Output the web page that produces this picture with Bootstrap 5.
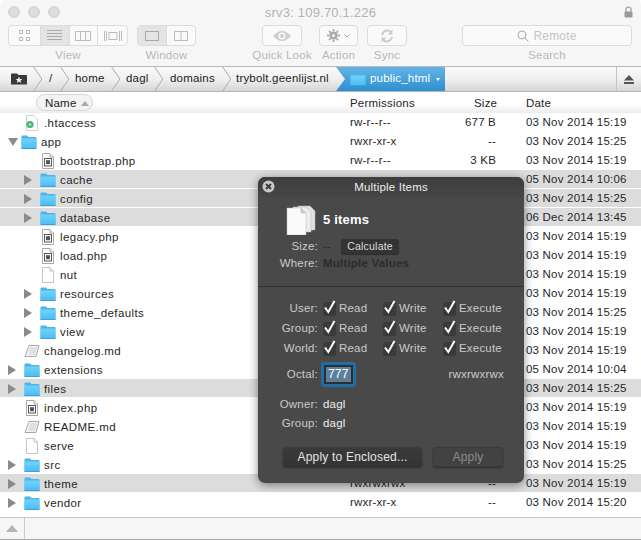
<!DOCTYPE html>
<html lang="en">
<head>
<meta charset="utf-8">
<title>srv3</title>
<link href="https://cdn.jsdelivr.net/npm/bootstrap@5.3.0/dist/css/bootstrap.min.css" rel="stylesheet">
<style>
html,body{margin:0;height:540px;overflow:hidden;background:#fff}
body{font-family:"Liberation Sans",Arial,sans-serif;font-size:11.5px;color:#262626;letter-spacing:.2px}
.win{width:641px;height:540px;position:relative;overflow:hidden;border-radius:5px 5px 0 0}
.topbar{height:67px;background:#f6f6f6;border-bottom:1px solid #b9b9b9}
.wintitle{height:25px;line-height:25px;text-align:center;color:#b3b3b3;font-size:13px;letter-spacing:.2px;position:relative}
.lights{position:absolute;left:8px;top:6px;gap:8px}
.lights i{width:12px;height:12px;border-radius:50%;background:#dcdcdc;border:1px solid #d0d0d0;display:block}
.lockic{position:absolute;right:8px;top:6px}
.tools{padding-left:8px}
.tgroup{display:flex;flex-direction:column;align-items:center}
.tlabel{color:#b9b9b9;font-size:11.5px;line-height:12px;margin-top:3px;white-space:nowrap}
.seg{display:flex;height:21px;border:1px solid #dcdcdc;border-radius:4px;background:#fafafa;overflow:hidden}
.seg span{display:flex;align-items:center;justify-content:center;border-left:1px solid #dcdcdc;height:100%}
.seg span:first-child{border-left:0}
.seg .on{background:#e4e4e4}
.g-view{width:120px}.g-window{width:59px;margin-left:9px}.g-ql{width:40px;margin-left:66px}
.g-action{width:39px;margin-left:17px}.g-sync{width:40px;margin-left:9px}.g-search{width:170px;margin-left:55px}
.searchtxt{color:#c4c4c4;font-size:12px;gap:4px}
.pathbar{height:25px;background:linear-gradient(#fafafa,#f0f0f0 50%,#d6d6d6);border-bottom:1px solid #b5b5b5;font-size:11.5px;color:#222}
.crumb{display:flex;align-items:center;height:100%;white-space:nowrap;flex:none}
.crumbsep{flex:none;display:block}
.crumbon{width:109px;height:100%;margin-left:-8px;padding-left:14px;gap:4px;color:#fff;display:flex;align-items:center;background:linear-gradient(#62b4e6,#2f8fd2);clip-path:polygon(0 0,100% 0,100% 100%,0 100%,9px 50%);flex:none}
.caretd{width:0;height:0;border-left:2.5px solid transparent;border-right:2.5px solid transparent;border-top:3px solid #fff;margin-left:2px}
.ejectbox{margin-left:auto;width:25px;height:100%;border-left:1px solid #c4c4c4;display:flex;align-items:center;justify-content:center}
.colhead{height:21px;background:linear-gradient(#fff 55%,#ececec);position:relative;font-size:11.5px}
.namepill{position:absolute;left:36px;top:2px;width:57px;height:17px;border:1px solid #d6d6d6;border-radius:9px;background:#f3f3f3;line-height:16px;padding-left:8px;color:#222}
.upc{position:absolute;left:44px;top:6px;width:0;height:0;border-left:4px solid transparent;border-right:4px solid transparent;border-bottom:5px solid #a8a8a8}
.hperm{position:absolute;left:350px;top:3px}.hsize{position:absolute;left:474px;top:3px}.hdate{position:absolute;left:526px;top:3px}
.frow{height:19px;display:flex;align-items:center;white-space:nowrap;position:relative}
.frow.sel{background:linear-gradient(#dcdcdc 18px,#fff 18px)}
.tw{width:8px;flex:none;margin-right:5px;display:block}
.ic{width:16px;height:16px;flex:none;margin-right:4px;display:block}
.fname{flex:none;line-height:18px;letter-spacing:.4px}
.cperm{position:absolute;left:350px;top:0;line-height:18px}
.csize{position:absolute;right:145px;top:0;line-height:18px}
.cdate{position:absolute;left:526px;top:0;line-height:18px}
.lv1{padding-left:8px}
.lv0f{padding-left:24px}
.lv2t{padding-left:24px}
.lv2f{padding-left:40px}
.footbar{position:absolute;left:0;right:0;bottom:0;height:23px;background:#f6f6f6;border-top:1px solid #c9c9c9;border-bottom:1px solid #aaa;display:flex}
.footup{width:25px;border-right:1px solid #ccc;display:flex;align-items:center;justify-content:center}
.dlg{position:absolute;left:258px;top:177px;width:266px;height:306px;background:rgba(70,70,70,.985);border-radius:7px;box-shadow:0 2px 10px rgba(0,0,0,.45);color:#c9c9c9;font-size:11.5px}
.dlghead{height:20px;line-height:20px;text-align:center;color:#eee;position:relative;background:linear-gradient(#3e3e3e,#454545);border-radius:7px 7px 0 0}
.dlgclose{position:absolute;left:4px;top:3px;display:block}
.inforow{height:36px;margin-top:5px;padding-left:28px}
.itemcount{font-weight:700;font-size:13px;color:#fff;margin-left:7px}
.lblw{width:60px;text-align:right;flex:none;margin-right:5px}
.szrow{height:17px}
.calc{background:#333;color:#ddd;border-radius:3px;width:58px;height:15px;line-height:15px;text-align:center;font-size:10.5px;margin-left:10px;box-shadow:0 1px 1px rgba(0,0,0,.4)}
.dim{color:#2c2c2c}
.dlghr{height:1px;background:#333;margin:14px 0 12px}
.permrow{height:20px}
.chk{width:13px;height:14px;background:#3a3a3a;border-radius:2px;flex:none;position:relative;margin-right:3px}
.chk svg{position:absolute;left:0;top:-3px;display:block}
.permcell{width:60px}
.octrow{height:25px;margin-top:3px}
.octbox{margin-left:-2px;width:35px;height:25px;border:3px solid #1f6ea6;border-radius:3px;background:#2e2e2e;display:flex;align-items:center;padding-left:2px;flex:none}
.octbox span{background:#5d7f9b;color:#fff;line-height:15px;padding:0 2px;font-size:12px}
.octmode{margin-left:auto;margin-right:20px;color:#ccc}
.ownrow{height:19px}
.ownrow1{margin-top:8px}
.ownv{color:#eee}
.dbtn{background:linear-gradient(#3b3b3b,#333);border-radius:3px;height:20px;line-height:20px;text-align:center;color:#e6e6e6;box-shadow:0 1px 2px rgba(0,0,0,.35);font-size:12px;flex:none}
.dbtn1{width:139px;margin-left:25px}
.dbtn2{width:70px;margin-left:11px;color:#8a8a8a;background:#424242;border:1px solid #3a3a3a;line-height:18px}
.btnrow{margin-top:14px}
</style>
</head>
<body>
<svg width="0" height="0" class="position-absolute">
<defs>
<linearGradient id="fg" x1="0" y1="0" x2="0" y2="1"><stop offset="0" stop-color="#6fd3fb"/><stop offset="1" stop-color="#4cbcf2"/></linearGradient>
<symbol id="folder" viewBox="0 0 16 16"><path d="M0.5 2.5Q0.5 1.5 1.5 1.5H6L7.5 3H14.5Q15.5 3 15.5 4V14.5H0.5Z" fill="#4cb4e8"/><path d="M0.5 4.5H15.5V14Q15.5 14.8 14.5 14.8H1.5Q0.5 14.8 0.5 14Z" fill="url(#fg)"/><rect x="0.5" y="14.2" width="15" height="0.8" fill="#2f9bd6"/></symbol>
<symbol id="doc" viewBox="0 0 16 16"><path d="M2.5 .5H10L13.5 4V15.5H2.5Z" fill="#fff" stroke="#c4c4c4"/><path d="M10 .5V4H13.5" fill="#eee" stroke="#c4c4c4"/></symbol>
<symbol id="php" viewBox="0 0 16 16"><path d="M2.5 .5H10L13.5 4V15.5H2.5Z" fill="#fff" stroke="#a8a8a8"/><path d="M10 .5V4H13.5" fill="#eee" stroke="#a8a8a8"/><rect x="4.5" y="5.5" width="7" height="7.5" fill="#fff" stroke="#555"/><rect x="6" y="7.2" width="4" height="4" fill="#555"/></symbol>
<symbol id="md" viewBox="0 0 16 16"><path d="M5 2.5H15L12 13.5H1Z" fill="#f3f3f3" stroke="#aaa"/><path d="M6 5H13M5.5 7H12.5M5 9H12M4.5 11H11" stroke="#c4d0dc"/></symbol>
<symbol id="hta" viewBox="0 0 16 16"><path d="M2.5 .5H10L13.5 4V15.5H2.5Z" fill="#fff" stroke="#d0d0d0"/><circle cx="6" cy="9.5" r="3.6" fill="#3fb56f"/><circle cx="6" cy="9.5" r="1.6" fill="#9fe0b8"/></symbol>
<symbol id="tr" viewBox="0 0 8 10"><path d="M0 0L8 5L0 10Z" fill="#8a8a8a"/></symbol>
<symbol id="td" viewBox="0 0 10 8"><path d="M0 0H10L5 8Z" fill="#8a8a8a"/></symbol>
<symbol id="chev" viewBox="0 0 10 25"><path d="M0.5 0L9 12.5L0.5 25" fill="none" stroke="#a9a9a9"/></symbol>
<symbol id="tick" viewBox="0 0 13 16"><path d="M2 8.5L5.3 13L11.5 2" fill="none" stroke="#fff" stroke-width="2"/></symbol>
</defs>
</svg>
<div class="win">
  <div class="topbar">
    <div class="wintitle">srv3: 109.70.1.226
      <div class="lights d-flex"><i></i><i></i><i></i></div>
      <svg class="lockic" width="9" height="12" viewBox="0 0 9 12"><path d="M2 6V3.5a2.5 2.5 0 0 1 5 0V6" fill="none" stroke="#9a9a9a" stroke-width="1.2"/><rect x=".5" y="5.5" width="8" height="6" rx="1" fill="#9a9a9a"/></svg>
    </div>
    <div class="tools d-flex">
      <div class="tgroup g-view">
        <div class="seg w-100">
          <span style="width:31px"><svg width="11" height="11" viewBox="0 0 11 11"><g fill="none" stroke="#bbb"><rect x=".5" y=".5" width="3" height="3"/><rect x="7.5" y=".5" width="3" height="3"/><rect x=".5" y="7.5" width="3" height="3"/><rect x="7.5" y="7.5" width="3" height="3"/></g></svg></span>
          <span class="on" style="width:29px"><svg width="15" height="11" viewBox="0 0 15 11"><path d="M0 .5H15M0 3.5H15M0 6.5H15M0 9.5H15" stroke="#aaa"/></svg></span>
          <span style="width:29px"><svg width="16" height="10" viewBox="0 0 16 10"><path d="M.5.5H15.5V9.5H.5ZM5.5.5V9.5M10.5.5V9.5" fill="none" stroke="#bbb"/></svg></span>
          <span style="width:30px"><svg width="18" height="10" viewBox="0 0 18 10"><path d="M.5 0V10M2.5 0V10M15.5 0V10M17.5 0V10" stroke="#bbb"/><rect x="5" y="1.5" width="8" height="7" fill="none" stroke="#bbb"/></svg></span>
        </div>
        <div class="tlabel">View</div>
      </div>
      <div class="tgroup g-window">
        <div class="seg w-100">
          <span class="on" style="width:29px"><svg width="14" height="10" viewBox="0 0 14 10"><rect x=".5" y=".5" width="13" height="9" fill="none" stroke="#aaa"/></svg></span>
          <span style="width:30px"><svg width="14" height="10" viewBox="0 0 14 10"><path d="M.5.5H13.5V9.5H.5ZM7 .5V9.5" fill="none" stroke="#bbb"/></svg></span>
        </div>
        <div class="tlabel">Window</div>
      </div>
      <div class="tgroup g-ql">
        <div class="seg w-100 justify-content-center align-items-center"><svg width="18" height="12" viewBox="0 0 18 12"><path d="M0 6Q9 -4 18 6Q9 16 0 6Z" fill="#cfcfcf"/><circle cx="9" cy="6" r="3.5" fill="#fafafa"/><circle cx="9" cy="6" r="2" fill="#cfcfcf"/></svg></div>
        <div class="tlabel">Quick Look</div>
      </div>
      <div class="tgroup g-action">
        <div class="seg w-100 justify-content-center align-items-center gap-1"><svg width="13" height="13" viewBox="0 0 13 13"><circle cx="6.5" cy="6.5" r="2.8" fill="none" stroke="#aaa" stroke-width="2.6"/><path d="M6.5 0V13M0 6.5H13M2 2L11 11M11 2L2 11" stroke="#aaa" stroke-width="1.8" stroke-dasharray="2.2 8.6 2.2"/></svg><svg width="6" height="4" viewBox="0 0 6 4"><path d="M.5.5L3 3L5.5.5" fill="none" stroke="#aaa"/></svg></div>
        <div class="tlabel">Action</div>
      </div>
      <div class="tgroup g-sync">
        <div class="seg w-100 justify-content-center align-items-center"><svg width="14" height="14" viewBox="0 0 14 14"><path d="M2.2 6A5 5 0 0 1 11 3.4M11.8 8A5 5 0 0 1 3 10.6" fill="none" stroke="#ccc" stroke-width="2"/><path d="M12.5 0.5V5.5H7.5ZM1.5 13.5V8.5H6.5Z" fill="#ccc"/></svg></div>
        <div class="tlabel">Sync</div>
      </div>
      <div class="tgroup g-search">
        <div class="seg w-100 justify-content-center align-items-center searchtxt"><svg width="12" height="12" viewBox="0 0 12 12"><circle cx="5" cy="5" r="4" fill="none" stroke="#aaa"/><path d="M8 8L11.5 11.5" stroke="#aaa"/></svg>Remote</div>
        <div class="tlabel">Search</div>
      </div>
    </div>
  </div>

  <div class="pathbar d-flex">
    <div class="crumb" style="width:33px;padding-left:11px"><svg width="16" height="12" viewBox="0 0 16 12"><path d="M0 1.5Q0 .5 1 .5H6L7.5 2H15Q16 2 16 3V11.5H0Z" fill="#3a3a3a"/><path d="M8 3.6L9 6H11.4L9.5 7.5L10.2 10L8 8.5L5.8 10L6.5 7.5L4.6 6H7Z" fill="#fff"/></svg></div>
    <svg class="crumbsep" width="10" height="24"><use href="#chev"/></svg>
    <div class="crumb" style="width:17px;padding-left:6px">/</div>
    <svg class="crumbsep" width="10" height="24"><use href="#chev"/></svg>
    <div class="crumb" style="width:41px;padding-left:5px">home</div>
    <svg class="crumbsep" width="10" height="24"><use href="#chev"/></svg>
    <div class="crumb" style="width:33px;padding-left:5px">dagl</div>
    <svg class="crumbsep" width="10" height="24"><use href="#chev"/></svg>
    <div class="crumb" style="width:58px;padding-left:6px">domains</div>
    <svg class="crumbsep" width="10" height="24"><use href="#chev"/></svg>
    <div class="crumb" style="width:112px;padding-left:4px">trybolt.geenlijst.nl</div>
    <div class="crumbon"><svg class="ic m-0" width="16" height="16"><use href="#folder"/></svg><span>public_html</span><i class="caretd"></i></div>
    <div class="ejectbox"><svg width="10" height="9" viewBox="0 0 10 9"><path d="M5 0L10 5.5H0Z" fill="#555"/><rect y="7" width="10" height="2" fill="#555"/></svg></div>
  </div>

  <div class="colhead">
    <div class="namepill">Name<i class="upc"></i></div>
    <span class="hperm">Permissions</span><span class="hsize">Size</span><span class="hdate">Date</span>
  </div>

  <div class="filelist">
    <div class="frow lv0f"><svg class="ic"><use href="#hta"/></svg><span class="fname">.htaccess</span><span class="cperm">rw-r--r--</span><span class="csize">677 B</span><span class="cdate">03 Nov 2014 15:19</span></div>
    <div class="frow lv1"><svg class="tw" height="8" width="10" style="width:10px;margin-right:3px"><use href="#td"/></svg><svg class="ic"><use href="#folder"/></svg><span class="fname">app</span><span class="cperm">rwxr-xr-x</span><span class="csize">--</span><span class="cdate">03 Nov 2014 15:25</span></div>
    <div class="frow lv2f"><svg class="ic"><use href="#php"/></svg><span class="fname">bootstrap.php</span><span class="cperm">rw-r--r--</span><span class="csize">3 KB</span><span class="cdate">03 Nov 2014 15:19</span></div>
    <div class="frow lv2t sel"><svg class="tw" height="10"><use href="#tr"/></svg><svg class="ic" style="margin-left:3px"><use href="#folder"/></svg><span class="fname">cache</span><span class="cdate">05 Nov 2014 10:06</span></div>
    <div class="frow lv2t sel"><svg class="tw" height="10"><use href="#tr"/></svg><svg class="ic" style="margin-left:3px"><use href="#folder"/></svg><span class="fname">config</span><span class="cdate">03 Nov 2014 15:25</span></div>
    <div class="frow lv2t sel"><svg class="tw" height="10"><use href="#tr"/></svg><svg class="ic" style="margin-left:3px"><use href="#folder"/></svg><span class="fname">database</span><span class="cdate">06 Dec 2014 13:45</span></div>
    <div class="frow lv2f"><svg class="ic"><use href="#php"/></svg><span class="fname">legacy.php</span><span class="cdate">03 Nov 2014 15:19</span></div>
    <div class="frow lv2f"><svg class="ic"><use href="#php"/></svg><span class="fname">load.php</span><span class="cdate">03 Nov 2014 15:19</span></div>
    <div class="frow lv2f"><svg class="ic"><use href="#doc"/></svg><span class="fname">nut</span><span class="cdate">03 Nov 2014 15:19</span></div>
    <div class="frow lv2t"><svg class="tw" height="10"><use href="#tr"/></svg><svg class="ic" style="margin-left:3px"><use href="#folder"/></svg><span class="fname">resources</span><span class="cdate">03 Nov 2014 15:19</span></div>
    <div class="frow lv2t"><svg class="tw" height="10"><use href="#tr"/></svg><svg class="ic" style="margin-left:3px"><use href="#folder"/></svg><span class="fname">theme_defaults</span><span class="cdate">03 Nov 2014 15:25</span></div>
    <div class="frow lv2t"><svg class="tw" height="10"><use href="#tr"/></svg><svg class="ic" style="margin-left:3px"><use href="#folder"/></svg><span class="fname">view</span><span class="cdate">03 Nov 2014 15:19</span></div>
    <div class="frow lv0f"><svg class="ic"><use href="#md"/></svg><span class="fname">changelog.md</span><span class="cdate">03 Nov 2014 15:19</span></div>
    <div class="frow lv1"><svg class="tw" height="10"><use href="#tr"/></svg><svg class="ic" style="margin-left:3px"><use href="#folder"/></svg><span class="fname">extensions</span><span class="cdate">05 Nov 2014 10:04</span></div>
    <div class="frow lv1 sel"><svg class="tw" height="10"><use href="#tr"/></svg><svg class="ic" style="margin-left:3px"><use href="#folder"/></svg><span class="fname">files</span><span class="cdate">03 Nov 2014 15:25</span></div>
    <div class="frow lv0f"><svg class="ic"><use href="#php"/></svg><span class="fname">index.php</span><span class="cdate">03 Nov 2014 15:19</span></div>
    <div class="frow lv0f"><svg class="ic"><use href="#md"/></svg><span class="fname">README.md</span><span class="cdate">03 Nov 2014 15:19</span></div>
    <div class="frow lv0f"><svg class="ic"><use href="#doc"/></svg><span class="fname">serve</span><span class="cdate">03 Nov 2014 15:19</span></div>
    <div class="frow lv1"><svg class="tw" height="10"><use href="#tr"/></svg><svg class="ic" style="margin-left:3px"><use href="#folder"/></svg><span class="fname">src</span><span class="cdate">03 Nov 2014 15:25</span></div>
    <div class="frow lv1 sel"><svg class="tw" height="10"><use href="#tr"/></svg><svg class="ic" style="margin-left:3px"><use href="#folder"/></svg><span class="fname">theme</span><span class="cperm">rwxrwxrwx</span><span class="csize">--</span><span class="cdate">03 Nov 2014 15:19</span></div>
    <div class="frow lv1"><svg class="tw" height="10"><use href="#tr"/></svg><svg class="ic" style="margin-left:3px"><use href="#folder"/></svg><span class="fname">vendor</span><span class="cperm">rwxr-xr-x</span><span class="csize">--</span><span class="cdate">03 Nov 2014 15:20</span></div>
  </div>

  <div class="footbar"><div class="footup"><svg width="12" height="7" viewBox="0 0 12 7"><path d="M6 0L12 7H0Z" fill="#b4b4b4"/></svg></div></div>

  <div class="dlg">
    <div class="dlghead">Multiple Items
      <svg class="dlgclose" width="13" height="13" viewBox="0 0 13 13"><circle cx="6.5" cy="6.5" r="6" fill="#c9c9c9"/><path d="M4 4L9 9M9 4L4 9" stroke="#3f3f3f" stroke-width="2"/></svg>
    </div>
    <div class="inforow d-flex align-items-center">
      <svg width="30" height="30" viewBox="0 0 30 30"><g stroke="#bbb" stroke-width=".5"><path d="M12 1H24L29 6V25H12Z" fill="#e0e0e0"/><path d="M7 2H20L25 7V27H7Z" fill="#ececec"/><path d="M1 3H15L20 8V30H1Z" fill="#fafafa"/><path d="M15 3V8H20" fill="#ccc"/></g></svg>
      <span class="itemcount">5 items</span>
    </div>
    <div class="d-flex align-items-center szrow"><span class="lblw">Size:</span><span class="dim">--</span><span class="calc">Calculate</span></div>
    <div class="d-flex align-items-center szrow"><span class="lblw">Where:</span><span class="dim fw-bold">Multiple Values</span></div>
    <div class="dlghr"></div>
    <div class="d-flex align-items-center permrow"><span class="lblw">User:</span><span class="d-flex align-items-center permcell"><i class="chk"><svg width="13" height="16"><use href="#tick"/></svg></i>Read</span><span class="d-flex align-items-center permcell"><i class="chk"><svg width="13" height="16"><use href="#tick"/></svg></i>Write</span><span class="d-flex align-items-center permcell"><i class="chk"><svg width="13" height="16"><use href="#tick"/></svg></i>Execute</span></div>
    <div class="d-flex align-items-center permrow"><span class="lblw">Group:</span><span class="d-flex align-items-center permcell"><i class="chk"><svg width="13" height="16"><use href="#tick"/></svg></i>Read</span><span class="d-flex align-items-center permcell"><i class="chk"><svg width="13" height="16"><use href="#tick"/></svg></i>Write</span><span class="d-flex align-items-center permcell"><i class="chk"><svg width="13" height="16"><use href="#tick"/></svg></i>Execute</span></div>
    <div class="d-flex align-items-center permrow"><span class="lblw">World:</span><span class="d-flex align-items-center permcell"><i class="chk"><svg width="13" height="16"><use href="#tick"/></svg></i>Read</span><span class="d-flex align-items-center permcell"><i class="chk"><svg width="13" height="16"><use href="#tick"/></svg></i>Write</span><span class="d-flex align-items-center permcell"><i class="chk"><svg width="13" height="16"><use href="#tick"/></svg></i>Execute</span></div>
    <div class="d-flex align-items-center octrow"><span class="lblw">Octal:</span><div class="octbox"><span>777</span></div><span class="octmode">rwxrwxrwx</span></div>
    <div class="d-flex align-items-center ownrow ownrow1"><span class="lblw">Owner:</span><span class="ownv">dagl</span></div>
    <div class="d-flex align-items-center ownrow"><span class="lblw">Group:</span><span class="ownv">dagl</span></div>
    <div class="d-flex btnrow"><div class="dbtn dbtn1">Apply to Enclosed...</div><div class="dbtn dbtn2">Apply</div></div>
  </div>
</div>
<script src="https://cdn.jsdelivr.net/npm/bootstrap@5.3.0/dist/js/bootstrap.bundle.min.js"></script>
</body>
</html>
